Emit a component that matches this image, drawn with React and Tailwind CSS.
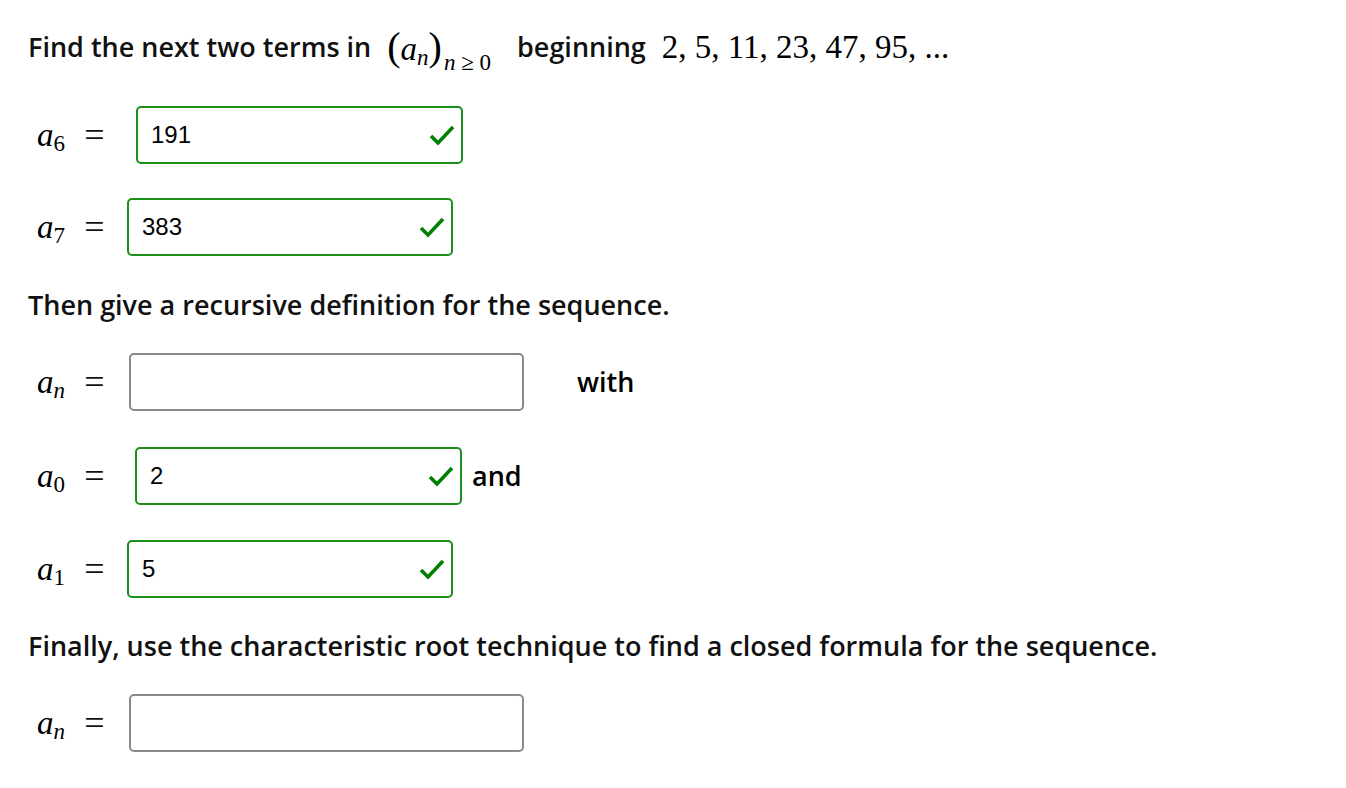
import React from 'react'

const serif = { fontFamily: '"Liberation Serif", "DejaVu Serif", serif' }

function Check() {
  return (
    <svg className="absolute right-[6px] top-1/2 -translate-y-1/2" width="26" height="22" viewBox="0 0 26 22">
      <path d="M2 12 L9 19 L24 3" fill="none" stroke="#008000" strokeWidth="3.6" />
    </svg>
  )
}

function Sym({ sub }) {
  return (
    <span className="text-[33px] leading-none text-black" style={serif}>
      <i>a</i>
      <span className={'text-[23px] relative top-[5px] ' + (sub === 'n' ? 'italic' : '')}>{sub}</span>
    </span>
  )
}

function Row({ sub, gap, width, value, correct, after, afterGap, className }) {
  return (
    <div className={'flex items-center h-[58px] ' + className}>
      <div className="w-[56px] pl-[9px]">
        <Sym sub={sub} />
      </div>
      <span className="text-[36px] leading-none w-[21px] text-center" style={serif}>=</span>
      <div
        className={
          'relative h-[58px] rounded-[5px] border-2 bg-white flex items-center pl-[13px] ' +
          (correct ? 'border-[#1a8f1a]' : 'border-[#8a8a8a]')
        }
        style={{ marginLeft: gap, width }}
      >
        <span className="text-[24px] text-black" style={{ fontFamily: '"Liberation Sans", Arial, sans-serif' }}>
          {value}
        </span>
        {correct && <Check />}
      </div>
      {after && (
        <span className="text-[27px] font-semibold text-black" style={{ marginLeft: afterGap }}>
          {after}
        </span>
      )}
    </div>
  )
}

export default function App() {
  return (
    <div className="min-h-screen bg-white text-[#111] pl-7 pt-[27px]" style={{ fontFamily: '"Open Sans", Lato, sans-serif' }}>
      <div className="flex items-center h-10 text-[27px] font-semibold whitespace-nowrap">
        <span>Find the next two terms in</span>
        <span className="ml-[16px] flex items-baseline font-normal text-black" style={serif}>
          <span className="text-[40px] leading-none">(</span>
          <span className="text-[33px] leading-none italic">a</span>
          <span className="text-[23px] leading-none italic relative top-[5px]">n</span>
          <span className="text-[40px] leading-none">)</span>
          <span className="ml-[2px] text-[23px] leading-none relative top-[10px] whitespace-pre"><i>n</i> ≥ 0</span>
        </span>
        <span className="ml-[26px]">beginning</span>
        <span className="ml-[16px] text-[33px] leading-none font-normal text-black" style={serif}>2, 5, 11, 23, 47, 95, ...</span>
      </div>

      <Row className="mt-[39px]" sub="6" gap={31} width={327} value="191" correct />
      <Row className="mt-[34px]" sub="7" gap={22} width={326} value="383" correct />

      <div className="mt-[29px] h-10 flex items-center text-[27px] font-semibold">
        Then give a recursive definition for the sequence.
      </div>

      <Row className="mt-[28px]" sub="n" gap={24} width={395} value="" after="with" afterGap={53} />
      <Row className="mt-[36px]" sub="0" gap={30} width={327} value="2" correct after="and" afterGap={10} />
      <Row className="mt-[35px]" sub="1" gap={22} width={326} value="5" correct />

      <div className="mt-[28px] h-10 flex items-center text-[27px] font-semibold">
        Finally, use the characteristic root technique to find a closed formula for the sequence.
      </div>

      <Row className="mt-[28px]" sub="n" gap={24} width={395} value="" />
    </div>
  )
}
